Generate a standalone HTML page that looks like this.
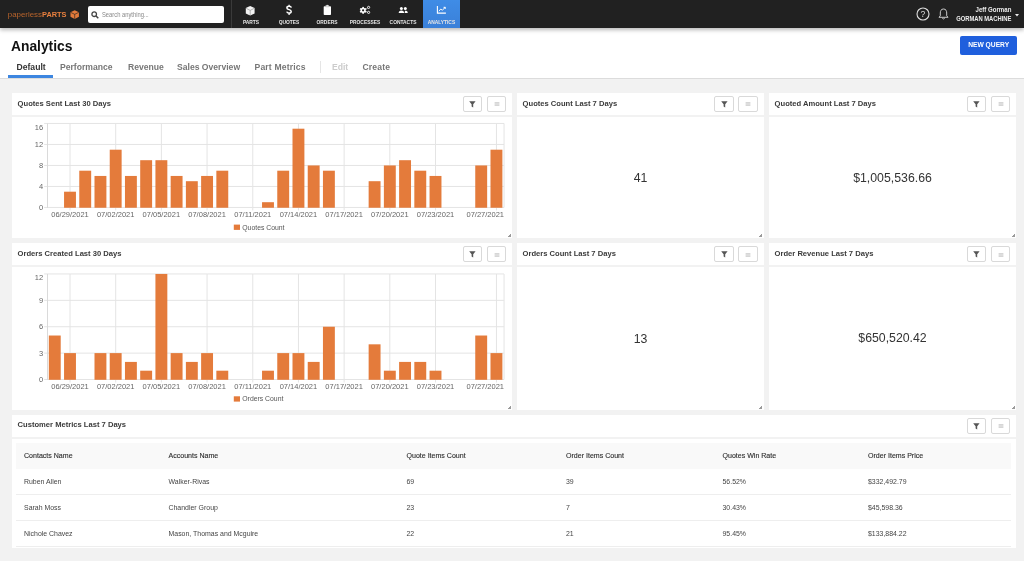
<!DOCTYPE html>
<html><head><meta charset="utf-8"><style>
*{box-sizing:border-box}
html,body{margin:0;padding:0;width:1024px;height:561px;overflow:hidden;background:#f2f2f2;font-family:"Liberation Sans",sans-serif;}
.nav{position:absolute;left:0;top:0;width:1024px;height:28px;background:#212121;box-shadow:0 1.5px 4px rgba(0,0,0,0.28);z-index:5}
.ph{position:absolute;left:0;top:28px;width:1024px;height:51px;background:#fff;border-bottom:1px solid #dcdcdc}
.card{position:absolute;background:#f2f2f2}
.chead{position:absolute;left:0;top:0;right:0;background:#fff}
.cbody{position:absolute;left:0;right:0;bottom:0;background:#fff}
.ctitle{position:absolute;left:5.6px;top:5.6px;font-size:7.6px;font-weight:700;color:#3a3a3a;white-space:nowrap}
.btn{position:absolute;top:3.2px;width:19.3px;height:16.2px;border:1px solid #d9d9d9;border-radius:2px;background:#fff;display:flex;align-items:center;justify-content:center}
.grip{position:absolute;right:1.2px;bottom:1px;width:3px;height:3px;background:linear-gradient(135deg,transparent 45%,#9a9a9a 50%)}
.big{position:absolute;left:0;right:0;text-align:center;font-size:12.3px;color:#333}
.tab{position:absolute;top:62.2px;font-size:8.6px;font-weight:700;color:#777;white-space:nowrap}
.ni{position:absolute;top:0;width:38px;height:28px;color:#fff;text-align:center}
.ni span{position:absolute;left:0;right:0;top:20.2px;font-size:4.9px;font-weight:700;color:#e6e6e6}
.ni svg{position:absolute;left:14px;top:6px}
svg text{font-family:"Liberation Sans",sans-serif}
.tbl{position:absolute;font-size:6.95px;color:#444;white-space:nowrap}
</style></head><body><div style="position:absolute;left:0;top:0;width:1024px;height:561px;will-change:transform">
<div class="nav">
  <div style="position:absolute;left:7.8px;top:9.7px;font-size:7.9px;color:#b8642c;white-space:nowrap">paperless<b style="color:#e8803f;font-size:7.4px">PARTS</b></div>
  <svg style="position:absolute;left:69.7px;top:9.6px" width="9.4" height="9.2" viewBox="0 0 10 10"><path d="M5 0.3 L9.6 2.4 V7.4 L5 9.7 L0.4 7.4 V2.4 Z" fill="#e47b3b"/><path d="M0.6 2.6 L5 4.7 L9.4 2.6 M5 4.7 V9.6" stroke="#212121" stroke-width="0.7" fill="none"/></svg>
  <div style="position:absolute;left:88px;top:6px;width:136px;height:17px;background:#fff;border-radius:2px"></div>
  <svg style="position:absolute;left:90.5px;top:11px" width="8" height="8" viewBox="0 0 8 8"><circle cx="3.2" cy="3.2" r="2.3" stroke="#444" stroke-width="1.3" fill="none"/><path d="M4.8 4.8 L7.3 7.3" stroke="#444" stroke-width="1.5"/></svg>
  <div style="position:absolute;left:102px;top:11.9px;font-size:5.8px;color:#888;white-space:nowrap;transform:scaleY(1.12);transform-origin:50% 78%">Search anything...</div>
  <div style="position:absolute;left:231px;top:0;width:1px;height:28px;background:#3a3a3a"></div>
  <div class="ni" style="left:232px"><span>PARTS</span></div>
  <div class="ni" style="left:270px"><span>QUOTES</span></div>
  <div class="ni" style="left:308px"><span>ORDERS</span></div>
  <div class="ni" style="left:346px"><span>PROCESSES</span></div>
  <div class="ni" style="left:384px"><span>CONTACTS</span></div>
  <div class="ni" style="left:422.5px;width:37.8px;background:linear-gradient(#3f8ce6,#3a80d8)"><span>ANALYTICS</span></div>
  <svg style="position:absolute;left:0;top:0" width="1024" height="28">
    <path d="M250.2 5.9 L254.6 8.1 V13.4 L250.2 15.6 L245.8 13.4 V8.1 Z" fill="#f2f2f2"/>
    <path d="M246.1 8.3 L250.2 10.4 L254.3 8.3 M250.2 10.4 V15.3" stroke="#8a8a8a" stroke-width="0.6" fill="none"/>
    <path d="M291.3 7.6 C291.1 6.6 290.3 6.3 289.1 6.3 C287.7 6.3 286.9 7 286.9 7.9 C286.9 9 288 9.3 289.1 9.6 C290.3 9.9 291.2 10.3 291.2 11.4 C291.2 12.4 290.4 13.1 289.1 13.1 C287.8 13.1 287 12.6 286.8 11.6" stroke="#fff" stroke-width="1.5" fill="none"/>
    <path d="M289.1 4.8 V6.4 M289.1 13 V15.1" stroke="#fff" stroke-width="1.3"/>
    <rect x="323.7" y="6.2" width="7.3" height="8.9" rx="0.8" fill="#fff"/>
    <path d="M325.7 6.8 H328.9 V5.6 Q327.3 4.3 325.7 5.6 Z" fill="#fff" stroke="#999" stroke-width="0.4"/>
    <g fill="#fff"><circle cx="363.1" cy="10.35" r="2.6"/>
    <rect x="362.3" y="6.9" width="1.6" height="6.9"/>
    <rect x="362.3" y="6.9" width="1.6" height="6.9" transform="rotate(60 363.1 10.35)"/>
    <rect x="362.3" y="6.9" width="1.6" height="6.9" transform="rotate(120 363.1 10.35)"/></g>
    <circle cx="363.1" cy="10.35" r="1.1" fill="#212121"/>
    <circle cx="368.6" cy="7.4" r="1.1" stroke="#fff" stroke-width="0.9" fill="none"/>
    <circle cx="368.6" cy="12.4" r="1.1" stroke="#fff" stroke-width="0.9" fill="none"/>
    <path d="M366 9.2 L367.6 8.2 M366 11.5 L367.6 12.3" stroke="#fff" stroke-width="0.6"/>
    <circle cx="401.4" cy="8.6" r="1.5" fill="#fff"/><circle cx="405.3" cy="8.6" r="1.5" fill="#fff"/>
    <path d="M398.7 13.1 Q398.7 10.6 401.4 10.6 Q404.1 10.6 404.1 13.1 Z" fill="#fff"/>
    <path d="M404.6 13.1 Q404.6 10.6 405.6 10.6 Q407.8 10.6 407.8 13.1 Z" fill="#fff"/>
    <path d="M437.4 6.1 V13.1 H445.9" stroke="#fff" stroke-width="1.1" fill="none"/>
    <path d="M438.9 11.2 L440.8 9 L442.4 10.3 L444.8 7.6" stroke="#fff" stroke-width="0.9" fill="none"/>
    <path d="M443.6 7.1 H445.4 V8.9 Z" fill="#fff" stroke="#fff" stroke-width="0.5"/>
  </svg>
  <svg style="position:absolute;left:916px;top:7px" width="14" height="14" viewBox="0 0 14 14"><circle cx="7" cy="7" r="6" stroke="#ddd" stroke-width="1.1" fill="none"/><text x="7" y="10" text-anchor="middle" font-size="8.6" fill="#ddd">?</text></svg>
  <svg style="position:absolute;left:938px;top:7.5px" width="11" height="12" viewBox="0 0 11 12"><path d="M5.5 1 C3 1 2.3 3 2.3 5 V7.8 L1 9.3 H10 L8.7 7.8 V5 C8.7 3 8 1 5.5 1 Z" stroke="#ddd" stroke-width="0.9" fill="none"/><path d="M4.3 10.3 Q5.5 11.6 6.7 10.3" stroke="#ddd" stroke-width="0.9" fill="none"/></svg>
  <div style="position:absolute;right:12.6px;top:6.1px;font-size:6.1px;font-weight:700;color:#eee;white-space:nowrap;transform:scaleY(1.17);transform-origin:50% 78%">Jeff Gorman</div>
  <div style="position:absolute;right:12.6px;top:15.5px;font-size:5.82px;font-weight:700;color:#eee;white-space:nowrap;transform:scaleY(1.2);transform-origin:50% 78%">GORMAN MACHINE</div>
  <svg style="position:absolute;left:1015px;top:14px" width="4" height="3" viewBox="0 0 4 3"><path d="M0 0 H4 L2 2.5 Z" fill="#eee"/></svg>
</div>
<div class="ph">
  <div style="position:absolute;left:11px;top:10.6px;font-size:13.8px;font-weight:700;color:#111;white-space:nowrap">Analytics</div>
  <div style="position:absolute;left:959.9px;top:8.1px;width:57.5px;height:18.8px;background:#1f5fdd;border-radius:2px;color:#fff;font-size:6.7px;font-weight:700;text-align:center;line-height:18.8px">NEW QUERY</div>
</div>
<div class="tab" style="left:16.5px;color:#333">Default</div>
<div style="position:absolute;left:8.3px;top:75px;width:44.6px;height:2.7px;background:#3d86e0"></div>
<div class="tab" style="left:60px">Performance</div>
<div class="tab" style="left:128px">Revenue</div>
<div class="tab" style="left:177px">Sales Overview</div>
<div class="tab" style="left:254.5px;letter-spacing:0.17px">Part Metrics</div>
<div style="position:absolute;left:319.5px;top:60.6px;width:1px;height:12.8px;background:#e5e5e5"></div>
<div class="tab" style="left:332px;color:#ccc">Edit</div>
<div class="tab" style="left:362.4px;letter-spacing:0.2px">Create</div>

<div class="card" style="left:12px;top:93px;width:500px;height:144.6px">
<div class="chead" style="height:22px"><span class="ctitle">Quotes Sent Last 30 Days</span>
<div class="btn" style="right:30px"><svg width="7" height="7" viewBox="0 0 7 7" style="margin:1px 0 0 1.2px"><path d="M0.2 0.3 H6.6 L4.2 3.2 V6.4 L2.6 5.6 V3.2 Z" fill="#555"/></svg></div><div class="btn" style="right:6px"><svg width="6" height="4" viewBox="0 0 6 4" style="margin:0.4px 0 0 1px"><rect x="0.6" y="0.4" width="4.8" height="1.1" fill="#bbb"/><rect x="0.6" y="2.5" width="4.8" height="1.1" fill="#bbb"/></svg></div></div>
<div class="cbody" style="top:24px"></div>
<div class="grip"></div>
</div>
<div class="card" style="left:517px;top:93px;width:246.6px;height:144.6px">
<div class="chead" style="height:22px"><span class="ctitle">Quotes Count Last 7 Days</span>
<div class="btn" style="right:30px"><svg width="7" height="7" viewBox="0 0 7 7" style="margin:1px 0 0 1.2px"><path d="M0.2 0.3 H6.6 L4.2 3.2 V6.4 L2.6 5.6 V3.2 Z" fill="#555"/></svg></div><div class="btn" style="right:6px"><svg width="6" height="4" viewBox="0 0 6 4" style="margin:0.4px 0 0 1px"><rect x="0.6" y="0.4" width="4.8" height="1.1" fill="#bbb"/><rect x="0.6" y="2.5" width="4.8" height="1.1" fill="#bbb"/></svg></div></div>
<div class="cbody" style="top:24px"></div>
<div class="grip"></div>
</div>
<div class="card" style="left:769px;top:93px;width:247px;height:144.6px">
<div class="chead" style="height:22px"><span class="ctitle">Quoted Amount Last 7 Days</span>
<div class="btn" style="right:30px"><svg width="7" height="7" viewBox="0 0 7 7" style="margin:1px 0 0 1.2px"><path d="M0.2 0.3 H6.6 L4.2 3.2 V6.4 L2.6 5.6 V3.2 Z" fill="#555"/></svg></div><div class="btn" style="right:6px"><svg width="6" height="4" viewBox="0 0 6 4" style="margin:0.4px 0 0 1px"><rect x="0.6" y="0.4" width="4.8" height="1.1" fill="#bbb"/><rect x="0.6" y="2.5" width="4.8" height="1.1" fill="#bbb"/></svg></div></div>
<div class="cbody" style="top:24px"></div>
<div class="grip"></div>
</div>
<div class="card" style="left:12px;top:243.1px;width:500px;height:166.7px">
<div class="chead" style="height:22px"><span class="ctitle">Orders Created Last 30 Days</span>
<div class="btn" style="right:30px"><svg width="7" height="7" viewBox="0 0 7 7" style="margin:1px 0 0 1.2px"><path d="M0.2 0.3 H6.6 L4.2 3.2 V6.4 L2.6 5.6 V3.2 Z" fill="#555"/></svg></div><div class="btn" style="right:6px"><svg width="6" height="4" viewBox="0 0 6 4" style="margin:0.4px 0 0 1px"><rect x="0.6" y="0.4" width="4.8" height="1.1" fill="#bbb"/><rect x="0.6" y="2.5" width="4.8" height="1.1" fill="#bbb"/></svg></div></div>
<div class="cbody" style="top:24px"></div>
<div class="grip"></div>
</div>
<div class="card" style="left:517px;top:243.1px;width:246.6px;height:166.7px">
<div class="chead" style="height:22px"><span class="ctitle">Orders Count Last 7 Days</span>
<div class="btn" style="right:30px"><svg width="7" height="7" viewBox="0 0 7 7" style="margin:1px 0 0 1.2px"><path d="M0.2 0.3 H6.6 L4.2 3.2 V6.4 L2.6 5.6 V3.2 Z" fill="#555"/></svg></div><div class="btn" style="right:6px"><svg width="6" height="4" viewBox="0 0 6 4" style="margin:0.4px 0 0 1px"><rect x="0.6" y="0.4" width="4.8" height="1.1" fill="#bbb"/><rect x="0.6" y="2.5" width="4.8" height="1.1" fill="#bbb"/></svg></div></div>
<div class="cbody" style="top:24px"></div>
<div class="grip"></div>
</div>
<div class="card" style="left:769px;top:243.1px;width:247px;height:166.7px">
<div class="chead" style="height:22px"><span class="ctitle">Order Revenue Last 7 Days</span>
<div class="btn" style="right:30px"><svg width="7" height="7" viewBox="0 0 7 7" style="margin:1px 0 0 1.2px"><path d="M0.2 0.3 H6.6 L4.2 3.2 V6.4 L2.6 5.6 V3.2 Z" fill="#555"/></svg></div><div class="btn" style="right:6px"><svg width="6" height="4" viewBox="0 0 6 4" style="margin:0.4px 0 0 1px"><rect x="0.6" y="0.4" width="4.8" height="1.1" fill="#bbb"/><rect x="0.6" y="2.5" width="4.8" height="1.1" fill="#bbb"/></svg></div></div>
<div class="cbody" style="top:24px"></div>
<div class="grip"></div>
</div>
<div class="card" style="left:12px;top:414.8px;width:1004px;height:133.2px">
<div class="chead" style="height:22.5px"><span class="ctitle">Customer Metrics Last 7 Days</span>
<div class="btn" style="right:30px"><svg width="7" height="7" viewBox="0 0 7 7" style="margin:1px 0 0 1.2px"><path d="M0.2 0.3 H6.6 L4.2 3.2 V6.4 L2.6 5.6 V3.2 Z" fill="#555"/></svg></div><div class="btn" style="right:6px"><svg width="6" height="4" viewBox="0 0 6 4" style="margin:0.4px 0 0 1px"><rect x="0.6" y="0.4" width="4.8" height="1.1" fill="#bbb"/><rect x="0.6" y="2.5" width="4.8" height="1.1" fill="#bbb"/></svg></div></div>
<div class="cbody" style="top:24.5px"></div>

</div>

<div class="big" style="left:517px;width:247px;top:171px">41</div>
<div class="big" style="left:769px;width:247px;top:171px">$1,005,536.66</div>
<div class="big" style="left:517px;width:247px;top:331.5px">13</div>
<div class="big" style="left:769px;width:247px;top:331.3px">$650,520.42</div>

<svg style="position:absolute;left:0;top:0" width="1024" height="561" font-size="7.5" fill="#666">
<line x1="44.15" y1="207.45" x2="504.05" y2="207.45" stroke="#e4e4e4"/>
<text x="43.2" y="210.05" text-anchor="end">0</text>
<line x1="44.15" y1="186.45" x2="504.05" y2="186.45" stroke="#e4e4e4"/>
<text x="43.2" y="189.05" text-anchor="end">4</text>
<line x1="44.15" y1="165.45" x2="504.05" y2="165.45" stroke="#e4e4e4"/>
<text x="43.2" y="168.05" text-anchor="end">8</text>
<line x1="44.15" y1="144.45" x2="504.05" y2="144.45" stroke="#e4e4e4"/>
<text x="43.2" y="147.05" text-anchor="end">12</text>
<line x1="44.15" y1="123.45" x2="504.05" y2="123.45" stroke="#e4e4e4"/>
<text x="43.2" y="129.65" text-anchor="end">16</text>
<line x1="47.5" y1="123.45" x2="47.5" y2="207.95" stroke="#dadada"/>
<line x1="504.05" y1="123.45" x2="504.05" y2="207.45" stroke="#e4e4e4"/>
<line x1="70.00" y1="123.45" x2="70.00" y2="210.45" stroke="#e4e4e4"/>
<text x="70.00" y="216.75" text-anchor="middle">06/29/2021</text>
<line x1="115.69" y1="123.45" x2="115.69" y2="210.45" stroke="#e4e4e4"/>
<text x="115.69" y="216.75" text-anchor="middle">07/02/2021</text>
<line x1="161.38" y1="123.45" x2="161.38" y2="210.45" stroke="#e4e4e4"/>
<text x="161.38" y="216.75" text-anchor="middle">07/05/2021</text>
<line x1="207.06" y1="123.45" x2="207.06" y2="210.45" stroke="#e4e4e4"/>
<text x="207.06" y="216.75" text-anchor="middle">07/08/2021</text>
<line x1="252.76" y1="123.45" x2="252.76" y2="210.45" stroke="#e4e4e4"/>
<text x="252.76" y="216.75" text-anchor="middle">07/11/2021</text>
<line x1="298.44" y1="123.45" x2="298.44" y2="210.45" stroke="#e4e4e4"/>
<text x="298.44" y="216.75" text-anchor="middle">07/14/2021</text>
<line x1="344.13" y1="123.45" x2="344.13" y2="210.45" stroke="#e4e4e4"/>
<text x="344.13" y="216.75" text-anchor="middle">07/17/2021</text>
<line x1="389.82" y1="123.45" x2="389.82" y2="210.45" stroke="#e4e4e4"/>
<text x="389.82" y="216.75" text-anchor="middle">07/20/2021</text>
<line x1="435.51" y1="123.45" x2="435.51" y2="210.45" stroke="#e4e4e4"/>
<text x="435.51" y="216.75" text-anchor="middle">07/23/2021</text>
<line x1="496.44" y1="123.45" x2="496.44" y2="210.45" stroke="#e4e4e4"/>
<text x="504.05" y="216.75" text-anchor="end">07/27/2021</text>
<rect x="64.05" y="191.70" width="11.9" height="16.05" fill="#e47b3b"/>
<rect x="79.27" y="170.70" width="11.9" height="37.05" fill="#e47b3b"/>
<rect x="94.50" y="175.95" width="11.9" height="31.80" fill="#e47b3b"/>
<rect x="109.73" y="149.70" width="11.9" height="58.05" fill="#e47b3b"/>
<rect x="124.96" y="175.95" width="11.9" height="31.80" fill="#e47b3b"/>
<rect x="140.20" y="160.20" width="11.9" height="47.55" fill="#e47b3b"/>
<rect x="155.43" y="160.20" width="11.9" height="47.55" fill="#e47b3b"/>
<rect x="170.66" y="175.95" width="11.9" height="31.80" fill="#e47b3b"/>
<rect x="185.89" y="181.20" width="11.9" height="26.55" fill="#e47b3b"/>
<rect x="201.12" y="175.95" width="11.9" height="31.80" fill="#e47b3b"/>
<rect x="216.35" y="170.70" width="11.9" height="37.05" fill="#e47b3b"/>
<rect x="262.04" y="202.20" width="11.9" height="5.55" fill="#e47b3b"/>
<rect x="277.26" y="170.70" width="11.9" height="37.05" fill="#e47b3b"/>
<rect x="292.50" y="128.70" width="11.9" height="79.05" fill="#e47b3b"/>
<rect x="307.73" y="165.45" width="11.9" height="42.30" fill="#e47b3b"/>
<rect x="322.95" y="170.70" width="11.9" height="37.05" fill="#e47b3b"/>
<rect x="368.64" y="181.20" width="11.9" height="26.55" fill="#e47b3b"/>
<rect x="383.88" y="165.45" width="11.9" height="42.30" fill="#e47b3b"/>
<rect x="399.11" y="160.20" width="11.9" height="47.55" fill="#e47b3b"/>
<rect x="414.33" y="170.70" width="11.9" height="37.05" fill="#e47b3b"/>
<rect x="429.56" y="175.95" width="11.9" height="31.80" fill="#e47b3b"/>
<rect x="475.25" y="165.45" width="11.9" height="42.30" fill="#e47b3b"/>
<rect x="490.49" y="149.70" width="11.9" height="58.05" fill="#e47b3b"/>
<rect x="233.8" y="224.6" width="6.2" height="5.3" fill="#e47b3b"/>
<text x="242.3" y="229.6" fill="#555" font-size="6.85">Quotes Count</text>
<line x1="44.15" y1="379.50" x2="504.05" y2="379.50" stroke="#e4e4e4"/>
<text x="43.2" y="382.10" text-anchor="end">0</text>
<line x1="44.15" y1="353.11" x2="504.05" y2="353.11" stroke="#e4e4e4"/>
<text x="43.2" y="355.71" text-anchor="end">3</text>
<line x1="44.15" y1="326.73" x2="504.05" y2="326.73" stroke="#e4e4e4"/>
<text x="43.2" y="329.33" text-anchor="end">6</text>
<line x1="44.15" y1="300.34" x2="504.05" y2="300.34" stroke="#e4e4e4"/>
<text x="43.2" y="302.94" text-anchor="end">9</text>
<line x1="44.15" y1="273.95" x2="504.05" y2="273.95" stroke="#e4e4e4"/>
<text x="43.2" y="280.15" text-anchor="end">12</text>
<line x1="47.5" y1="273.95" x2="47.5" y2="380.0" stroke="#dadada"/>
<line x1="504.05" y1="273.95" x2="504.05" y2="379.5" stroke="#e4e4e4"/>
<line x1="70.00" y1="273.95" x2="70.00" y2="382.5" stroke="#e4e4e4"/>
<text x="70.00" y="388.80" text-anchor="middle">06/29/2021</text>
<line x1="115.69" y1="273.95" x2="115.69" y2="382.5" stroke="#e4e4e4"/>
<text x="115.69" y="388.80" text-anchor="middle">07/02/2021</text>
<line x1="161.38" y1="273.95" x2="161.38" y2="382.5" stroke="#e4e4e4"/>
<text x="161.38" y="388.80" text-anchor="middle">07/05/2021</text>
<line x1="207.06" y1="273.95" x2="207.06" y2="382.5" stroke="#e4e4e4"/>
<text x="207.06" y="388.80" text-anchor="middle">07/08/2021</text>
<line x1="252.76" y1="273.95" x2="252.76" y2="382.5" stroke="#e4e4e4"/>
<text x="252.76" y="388.80" text-anchor="middle">07/11/2021</text>
<line x1="298.44" y1="273.95" x2="298.44" y2="382.5" stroke="#e4e4e4"/>
<text x="298.44" y="388.80" text-anchor="middle">07/14/2021</text>
<line x1="344.13" y1="273.95" x2="344.13" y2="382.5" stroke="#e4e4e4"/>
<text x="344.13" y="388.80" text-anchor="middle">07/17/2021</text>
<line x1="389.82" y1="273.95" x2="389.82" y2="382.5" stroke="#e4e4e4"/>
<text x="389.82" y="388.80" text-anchor="middle">07/20/2021</text>
<line x1="435.51" y1="273.95" x2="435.51" y2="382.5" stroke="#e4e4e4"/>
<text x="435.51" y="388.80" text-anchor="middle">07/23/2021</text>
<line x1="496.44" y1="273.95" x2="496.44" y2="382.5" stroke="#e4e4e4"/>
<text x="504.05" y="388.80" text-anchor="end">07/27/2021</text>
<rect x="48.81" y="335.52" width="11.9" height="44.28" fill="#e47b3b"/>
<rect x="64.05" y="353.11" width="11.9" height="26.69" fill="#e47b3b"/>
<rect x="94.50" y="353.11" width="11.9" height="26.69" fill="#e47b3b"/>
<rect x="109.73" y="353.11" width="11.9" height="26.69" fill="#e47b3b"/>
<rect x="124.96" y="361.91" width="11.9" height="17.89" fill="#e47b3b"/>
<rect x="140.20" y="370.70" width="11.9" height="9.10" fill="#e47b3b"/>
<rect x="155.43" y="273.95" width="11.9" height="105.85" fill="#e47b3b"/>
<rect x="170.66" y="353.11" width="11.9" height="26.69" fill="#e47b3b"/>
<rect x="185.89" y="361.91" width="11.9" height="17.89" fill="#e47b3b"/>
<rect x="201.12" y="353.11" width="11.9" height="26.69" fill="#e47b3b"/>
<rect x="216.35" y="370.70" width="11.9" height="9.10" fill="#e47b3b"/>
<rect x="262.04" y="370.70" width="11.9" height="9.10" fill="#e47b3b"/>
<rect x="277.26" y="353.11" width="11.9" height="26.69" fill="#e47b3b"/>
<rect x="292.50" y="353.11" width="11.9" height="26.69" fill="#e47b3b"/>
<rect x="307.73" y="361.91" width="11.9" height="17.89" fill="#e47b3b"/>
<rect x="322.95" y="326.73" width="11.9" height="53.08" fill="#e47b3b"/>
<rect x="368.64" y="344.32" width="11.9" height="35.48" fill="#e47b3b"/>
<rect x="383.88" y="370.70" width="11.9" height="9.10" fill="#e47b3b"/>
<rect x="399.11" y="361.91" width="11.9" height="17.89" fill="#e47b3b"/>
<rect x="414.33" y="361.91" width="11.9" height="17.89" fill="#e47b3b"/>
<rect x="429.56" y="370.70" width="11.9" height="9.10" fill="#e47b3b"/>
<rect x="475.25" y="335.52" width="11.9" height="44.28" fill="#e47b3b"/>
<rect x="490.49" y="353.11" width="11.9" height="26.69" fill="#e47b3b"/>
<rect x="233.8" y="396.3" width="6.2" height="5.3" fill="#e47b3b"/>
<text x="242.3" y="401.1" fill="#555" font-size="6.85">Orders Count</text>
</svg>

<div style="position:absolute;left:16px;top:443px;width:995px;height:25.5px;background:#f9f9f9"></div>
<div style="position:absolute;left:16px;top:494px;width:995px;height:1px;background:#eeeeee"></div>
<div style="position:absolute;left:16px;top:520px;width:995px;height:1px;background:#eeeeee"></div>
<div style="position:absolute;left:16px;top:546px;width:995px;height:1px;background:#eeeeee"></div>
<div class="tbl" style="left:24px;top:452.0px;font-size:7.05px;color:#2e2e2e;-webkit-text-stroke:0.12px #2e2e2e">Contacts Name</div>
<div class="tbl" style="left:168.5px;top:452.0px;font-size:7.05px;color:#2e2e2e;-webkit-text-stroke:0.12px #2e2e2e">Accounts Name</div>
<div class="tbl" style="left:406.5px;top:452.0px;font-size:7.05px;color:#2e2e2e;-webkit-text-stroke:0.12px #2e2e2e">Quote Items Count</div>
<div class="tbl" style="left:566px;top:452.0px;font-size:7.05px;color:#2e2e2e;-webkit-text-stroke:0.12px #2e2e2e">Order Items Count</div>
<div class="tbl" style="left:722.5px;top:452.0px;font-size:7.05px;color:#2e2e2e;-webkit-text-stroke:0.12px #2e2e2e">Quotes Win Rate</div>
<div class="tbl" style="left:868px;top:452.0px;font-size:7.05px;color:#2e2e2e;-webkit-text-stroke:0.12px #2e2e2e">Order Items Price</div>
<div class="tbl" style="left:24px;top:477.8px;">Ruben Allen</div>
<div class="tbl" style="left:168.5px;top:477.8px;">Walker-Rivas</div>
<div class="tbl" style="left:406.5px;top:477.8px;">69</div>
<div class="tbl" style="left:566px;top:477.8px;">39</div>
<div class="tbl" style="left:722.5px;top:477.8px;">56.52%</div>
<div class="tbl" style="left:868px;top:477.8px;">$332,492.79</div>
<div class="tbl" style="left:24px;top:503.8px;">Sarah Moss</div>
<div class="tbl" style="left:168.5px;top:503.8px;">Chandler Group</div>
<div class="tbl" style="left:406.5px;top:503.8px;">23</div>
<div class="tbl" style="left:566px;top:503.8px;">7</div>
<div class="tbl" style="left:722.5px;top:503.8px;">30.43%</div>
<div class="tbl" style="left:868px;top:503.8px;">$45,598.36</div>
<div class="tbl" style="left:24px;top:529.9px;">Nichole Chavez</div>
<div class="tbl" style="left:168.5px;top:529.9px;">Mason, Thomas and Mcguire</div>
<div class="tbl" style="left:406.5px;top:529.9px;">22</div>
<div class="tbl" style="left:566px;top:529.9px;">21</div>
<div class="tbl" style="left:722.5px;top:529.9px;">95.45%</div>
<div class="tbl" style="left:868px;top:529.9px;">$133,884.22</div>
</div></body></html>
